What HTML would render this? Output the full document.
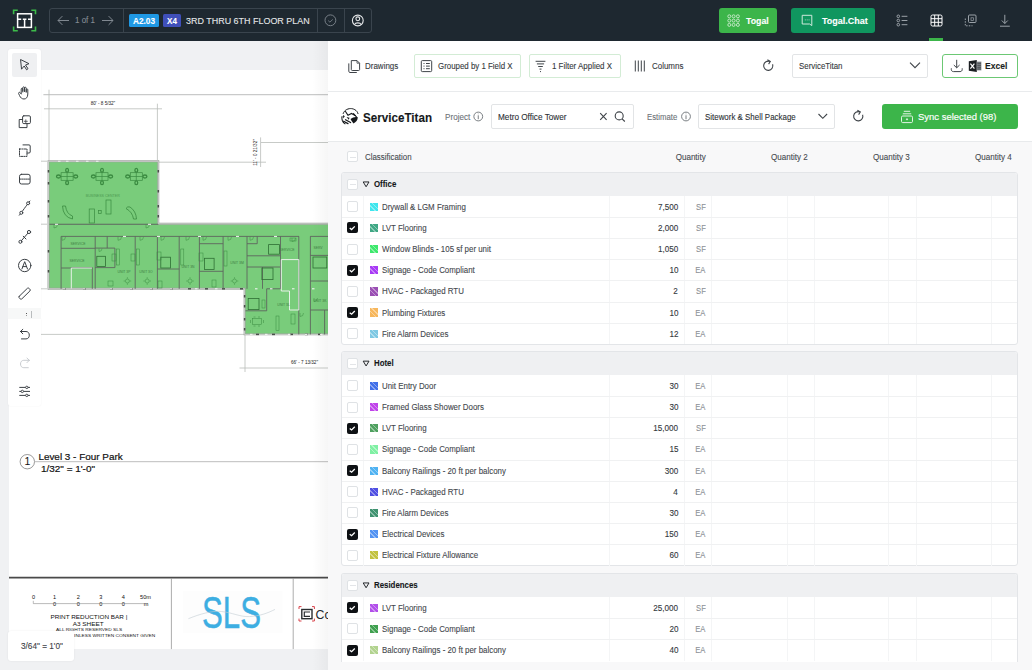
<!DOCTYPE html><html><head><meta charset="utf-8"><title>Togal</title><style>
*{margin:0;padding:0;box-sizing:border-box}
html,body{width:1032px;height:670px;overflow:hidden;background:#f0f1f3;font-family:"Liberation Sans", sans-serif;}
.abs{position:absolute}
.t{position:absolute;white-space:nowrap;line-height:1;-webkit-text-stroke:0.1px currentColor}
svg{position:absolute;overflow:visible}
.cb{position:absolute;width:10.8px;height:11px;border:1px solid #dfe2e5;border-radius:2px;background:#fff}
.cbk{position:absolute;width:10.8px;height:11px;border-radius:2px;background:#0e1114}
.sw{position:absolute;width:8.3px;height:8.2px}
</style></head><body>
<div class="abs" style="left:0;top:0;width:1032px;height:40.6px;background:#1e2830"></div>
<svg style="left:0;top:0" width="60" height="41" viewBox="0 0 60 41">
<g fill="none" stroke="#3dbb4a" stroke-width="1.6">
<path d="M13.6 14.3 V10.3 H17.8"/><path d="M31.3 10.3 H35.5 V14.3"/><path d="M13.6 26.6 V30.7 H17.8"/><path d="M31.3 30.7 H35.5 V26.6"/>
</g>
<g fill="none" stroke="#ffffff" stroke-width="1.5">
<rect x="17.6" y="13.8" width="13.8" height="13.6"/>
<path d="M17.6 19.3 H21.2 M22.8 19.3 H26.4 M28 19.3 H31.4 M24.6 19.3 V27.4"/>
</g></svg>
<div class="abs" style="left:49px;top:8.4px;width:323px;height:24.2px;border:1px solid #3a444d;border-radius:3px"></div>
<div class="abs" style="left:122.6px;top:8.4px;width:1px;height:24.2px;background:#3a444d"></div>
<div class="abs" style="left:316.8px;top:8.4px;width:1px;height:24.2px;background:#3a444d"></div>
<div class="abs" style="left:344.3px;top:8.4px;width:1px;height:24.2px;background:#3a444d"></div>
<svg style="left:0;top:0" width="372" height="41">
<g fill="none" stroke="#808890" stroke-width="1">
<path d="M58 20.5 H69 M62.4 16.1 L58 20.5 L62.4 24.9"/>
<path d="M102 20.5 H113 M108.6 16.1 L113 20.5 L108.6 24.9"/>
<circle cx="330.4" cy="20.3" r="5.4" stroke-width="0.9"/>
<path d="M328.2 20.6 L329.9 22.1 L332.8 19.4" stroke-width="0.8"/>
</g>
<g fill="none" stroke="#e6e8ea" stroke-width="1.1">
<circle cx="357.8" cy="20.5" r="5.4"/>
<circle cx="357.8" cy="18.8" r="1.9"/>
<path d="M354.4 24.6 C355.4 22.3 360.2 22.3 361.2 24.6"/>
</g></svg>
<div class="t" style="left:75.20px;top:16px;width:21.27px;font-size:8.5px;color:#858d94;transform:scaleX(0.9357);transform-origin:0 0;">1 of 1</div>
<div class="abs" style="left:129px;top:13.9px;width:29.5px;height:13px;background:#1f98e4;border-radius:1.5px"></div>
<div class="t" style="left:132.75px;top:17px;width:22.68px;font-size:8.5px;font-weight:bold;color:#fff;transform:scaleX(0.9699);transform-origin:0 0;">A2.03</div>
<div class="abs" style="left:163px;top:13.9px;width:18px;height:13px;background:#3f4fb9;border-radius:1.5px"></div>
<div class="t" style="left:166.90px;top:17px;width:10.40px;font-size:8.5px;font-weight:bold;color:#fff;transform:scaleX(0.9522);transform-origin:0 0;">X4</div>
<div class="t" style="left:185.90px;top:16px;width:131.27px;font-size:9.5px;color:#e4e7e9;transform:scaleX(0.9423);transform-origin:0 0;">3RD THRU 6TH FLOOR PLAN</div>
<div class="abs" style="left:719.2px;top:7.9px;width:58.3px;height:24.9px;background:#3cb54a;border-radius:3px"></div>
<div class="t" style="left:746.20px;top:17px;width:23.98px;font-size:9.25px;font-weight:bold;color:#fff;transform:scaleX(0.9467);transform-origin:0 0;">Togal</div>
<div class="abs" style="left:791px;top:7.9px;width:84px;height:24.9px;background:#10965f;border-radius:3px"></div>
<div class="t" style="left:821.60px;top:17px;width:47.10px;font-size:9.25px;font-weight:bold;color:#fff;transform:scaleX(0.9702);transform-origin:0 0;">Togal.Chat</div>
<svg style="left:0;top:0" width="1032" height="41">
<g fill="none" stroke="#d9f0db" stroke-width="0.8"><circle cx="729.30" cy="16.30" r="1.5"/><circle cx="733.60" cy="16.30" r="1.5"/><circle cx="737.90" cy="16.30" r="1.5"/><circle cx="729.30" cy="20.60" r="1.5"/><circle cx="733.60" cy="20.60" r="1.5"/><circle cx="737.90" cy="20.60" r="1.5"/><circle cx="729.30" cy="24.90" r="1.5"/><circle cx="733.60" cy="24.90" r="1.5"/><circle cx="737.90" cy="24.90" r="1.5"/></g>
<g fill="none" stroke="#cfe9dc" stroke-width="1">
<path d="M802.2 15.3 H811.8 V25.6 L809.6 24 H802.2 Z"/>
<path d="M804.9 19.9 h0.7 M806.8 19.9 h0.7 M808.7 19.9 h0.7"/>
</g>
<g fill="none" stroke="#9ba2a8" stroke-width="1">
<circle cx="898.3" cy="16.3" r="1.3"/><circle cx="898.3" cy="20.5" r="1.3"/><circle cx="898.3" cy="24.7" r="1.3"/>
<path d="M901.6 16.3 H907.4 M901.6 20.5 H907.4 M901.6 24.7 H907.4"/>
</g>
<g fill="none" stroke="#ffffff" stroke-width="1">
<rect x="931" y="15" width="11" height="11" rx="1.5"/>
<path d="M934.7 15 V26 M938.3 15 V26 M931 18.7 H942 M931 22.3 H942"/>
</g>
<g fill="none" stroke="#9ba2a8" stroke-width="1">
<rect x="968.5" y="15" width="7.5" height="7.5" rx="1"/>
<rect x="971" y="17.8" width="2.6" height="2.6" stroke-width="0.7"/>
<path d="M965.3 18.5 V25.8 H972.5" stroke-dasharray="1.5 1.2"/>
<path d="M1004.8 14.8 V23.5 M1001.8 20.5 L1004.8 23.5 L1007.8 20.5 M1000 26.2 H1009.8"/>
</g>
</svg>
<div class="abs" style="left:929.4px;top:38.2px;width:14px;height:2.4px;background:#3cb54a"></div>
<div class="abs" style="left:0;top:40.6px;width:328px;height:630px;background:#f0f1f3"></div>
<div class="abs" style="left:9px;top:70px;width:319px;height:579.3px;background:#ffffff"></div>
<svg style="left:0;top:0" width="328" height="670" viewBox="0 0 328 670">
<defs><clipPath id="pc"><rect x="9" y="70" width="319" height="579.3"/></clipPath></defs>
<g clip-path="url(#pc)">
<g stroke="#b9bcb9" stroke-width="0.8" fill="none">
<path d="M43.4 94.7 H330" stroke-width="1.3" stroke="#c9caca"/><path d="M49 89.7 V160 M44 108.8 H162 M157.4 103.7 V160 M158 162.2 H266 M260.6 137.4 V167 M261 142.5 H330"/>
<path d="M40 161.2 H47 M40 224.2 H47 M40 288.8 H47"/>
<path d="M40 334.4 H244.5 M245 334 V372 M239.5 368 H330"/>
</g>
<text x="103" y="104.8" font-family="Liberation Sans" font-size="4.6" text-anchor="middle" fill="#222">80' - 8 5/32"</text>
<text transform="translate(256.6 152.5) rotate(-90)" font-family="Liberation Sans" font-size="4.6" text-anchor="middle" fill="#222">11' - 0 21/32"</text>
<text x="304.5" y="364.2" font-family="Liberation Sans" font-size="4.6" text-anchor="middle" fill="#222">66' - 7 13/32"</text>
<path d="M48.5 161.3 H158.3 V223.8 H330 V334.4 H244.6 V288.8 H48.5 Z" fill="#79cc7b" stroke="#9a9f9a" stroke-width="1.9"/>
<path d="M48.5 161.3 H158.3 V223.8 H330 V334.4 H244.6 V288.8 H48.5 Z" fill="none" stroke="#e9ece9" stroke-width="0.6"/>
<g stroke="#4a4f4a" stroke-width="1.5">
<path d="M63 288.8 h3"/>
<path d="M83 288.8 h3"/>
<path d="M110 288.8 h3"/>
<path d="M130 288.8 h3"/>
<path d="M150 288.8 h3"/>
<path d="M170 288.8 h3"/>
<path d="M188 288.8 h3"/>
<path d="M205 288.8 h3"/>
<path d="M222 288.8 h3"/>
<path d="M240 288.8 h3"/>
<path d="M256 334.4 h3"/>
<path d="M272 334.4 h3"/>
<path d="M290 334.4 h3"/>
<path d="M305 334.4 h3"/>
<path d="M318 334.4 h3"/>
<path d="M48.5 170 v2.5"/>
<path d="M48.5 182 v2.5"/>
<path d="M48.5 200 v2.5"/>
<path d="M48.5 215 v2.5"/>
<path d="M48.5 250 v2.5"/>
<path d="M48.5 270 v2.5"/>
<path d="M158.3 170 v2.5"/>
<path d="M158.3 190 v2.5"/>
<path d="M158.3 205 v2.5"/>
<path d="M158.3 215 v2.5"/>
<path d="M244.6 295 v2.5"/>
<path d="M244.6 305 v2.5"/>
<path d="M244.6 318 v2.5"/>
<path d="M244.6 328 v2.5"/>
</g>
<g stroke="#5f655f" stroke-width="0.9" fill="none">
<path d="M49.5 224.3 H158.3" stroke-width="1.1"/>
<path d="M61.1 236.4 H299 M310.2 236.4 H330"/>
<path d="M61.1 236.4 V288.8 M95.2 236.4 V288.8 M135.2 236.4 V288.8 M179.2 236.4 V288.8 M223.1 236.4 V288.8"/>
<path d="M61.1 248.3 H95.2 M61.1 268 H71.3 M95.2 248.1 H114.9 M95.2 267.6 H114.9 M107.2 236.4 V248.1 M114.9 248.1 V267.6"/>
<path d="M71.3 267.6 H92.3 V288.8"/>
<path d="M157.4 236.4 V288.8 M157.4 269 H179.2 M199.4 236.4 V288.8 M199.4 243.7 H223.1 M199.4 271.3 H223.1"/>
<path d="M247 236.4 V288.8 M247 243.7 H257.2 M257.2 236.4 V243.7 M247 255.8 H280.5 M247 267 H280.5 M262.5 267 V288.8 M280.5 236.4 V288.8 M266.7 288.8 H280.5"/>
<path d="M298.8 236.4 V334.4 M310.4 236.4 V334.4 M310.4 255.4 H330 M310.4 281 H330 M310.4 310 H330 M324.6 310 V334.4"/>
<path d="M245.5 310.8 H266.7 V288.8"/>
</g>
<path d="M281.3 259.6 H298.8 V310 H289.5 V291 H281.3 Z" fill="none" stroke="#f4f6f4" stroke-width="0.9"/>
<path d="M71.3 288.5 V268 H92" fill="none" stroke="#f4f6f4" stroke-width="0.9"/>
<g stroke="#3a8a40" stroke-width="0.7" fill="none">
<rect x="61.099999999999994" y="172.7" width="12" height="7.6"/><path d="M67.1 172.7 V180.3 M61.099999999999994 176.5 H73.1"/>
<ellipse cx="67.1" cy="170.3" rx="1.4" ry="1.9" stroke-width="1.3"/><ellipse cx="67.1" cy="182.7" rx="1.4" ry="1.9" stroke-width="1.3"/>
<ellipse cx="58.49999999999999" cy="176.5" rx="2" ry="1.5" stroke-width="1.3"/><ellipse cx="75.69999999999999" cy="176.5" rx="2" ry="1.5" stroke-width="1.3"/>
<rect x="96.0" y="172.7" width="12" height="7.6"/><path d="M102.0 172.7 V180.3 M96.0 176.5 H108.0"/>
<ellipse cx="102.0" cy="170.3" rx="1.4" ry="1.9" stroke-width="1.3"/><ellipse cx="102.0" cy="182.7" rx="1.4" ry="1.9" stroke-width="1.3"/>
<ellipse cx="93.4" cy="176.5" rx="2" ry="1.5" stroke-width="1.3"/><ellipse cx="110.6" cy="176.5" rx="2" ry="1.5" stroke-width="1.3"/>
<rect x="130.3" y="172.7" width="12" height="7.6"/><path d="M136.3 172.7 V180.3 M130.3 176.5 H142.3"/>
<ellipse cx="136.3" cy="170.3" rx="1.4" ry="1.9" stroke-width="1.3"/><ellipse cx="136.3" cy="182.7" rx="1.4" ry="1.9" stroke-width="1.3"/>
<ellipse cx="127.70000000000002" cy="176.5" rx="2" ry="1.5" stroke-width="1.3"/><ellipse cx="144.9" cy="176.5" rx="2" ry="1.5" stroke-width="1.3"/>
<path d="M62.5 206 h3 Q66.5 214 72.5 216 v3 Q63 217 62.5 206 Z" stroke-width="0.8"/>
<path d="M126 208.5 Q127.5 206 130 207 Q136 211 136.5 219 h-3 Q132.5 212 126 208.5 Z" stroke-width="0.8"/>
<rect x="89.2" y="209" width="5.4" height="14"/><rect x="98.4" y="210.5" width="2.8" height="3"/><rect x="106" y="200" width="5" height="14"/>
</g>
<text x="102.8" y="196.7" font-family="Liberation Sans" font-size="3.6" text-anchor="middle" fill="#4d9a52">BUSINESS CENTER</text>
<g font-family="Liberation Sans" font-size="3.4" fill="#3f7f44" text-anchor="middle">
<text x="78" y="245">SERVICE</text>
<text x="77" y="262">SERVICE</text>
<text x="124" y="273">UNIT 3P</text>
<text x="146" y="273">UNIT 3O</text>
<text x="188" y="268">UNIT 3N</text>
<text x="237" y="264">UNIT 3M</text>
<text x="287" y="250.5">SERVICE</text>
<text x="318" y="249">SERV</text>
<text x="283.5" y="305.5">UNIT 3L</text>
<text x="320" y="302">UNIT 3K</text>
</g>
<g stroke="#2f6f35" stroke-width="0.8" fill="none">
<rect x="96.8" y="256.3" width="8.7" height="10.2"/>
<rect x="160.8" y="257.2" width="9.7" height="10.8"/>
<rect x="204.5" y="258.3" width="9.6" height="11.1"/>
<rect x="268.6" y="244.6" width="10.8" height="9.6"/>
<rect x="248.2" y="298.5" width="10.8" height="11.1"/>
<rect x="313" y="257" width="13.8" height="11"/>
<rect x="261.9" y="268" width="11.1" height="11.6"/>
</g>
<g stroke="#3a8a40" stroke-width="0.5" fill="none">
<rect x="116.5" y="249" width="3" height="16"/>
<rect x="136.5" y="249" width="3" height="16"/>
<rect x="180.8" y="249" width="3" height="16"/>
<rect x="224" y="251" width="3" height="15"/>
<rect x="276" y="316" width="3" height="14.5"/>
<rect x="112" y="254" width="4" height="7"/>
<rect x="131" y="254" width="4" height="7"/>
<rect x="157" y="252" width="4" height="8"/>
<rect x="199" y="253" width="4" height="8"/>
<rect x="262" y="300" width="3" height="8"/>
<rect x="291" y="314" width="4" height="10"/>
<rect x="108" y="281" width="5" height="5"/>
<rect x="158" y="281" width="4" height="7"/>
<rect x="212" y="280" width="4" height="7"/>
<rect x="290" y="238" width="6" height="3"/>
<circle cx="127.4" cy="281" r="2"/><path d="M123.60000000000001 281 h1.4 M129.8 281 h1.4 M127.4 277.2 v1.4 M127.4 283.4 v1.4"/>
<circle cx="147.2" cy="281" r="2"/><path d="M143.39999999999998 281 h1.4 M149.6 281 h1.4 M147.2 277.2 v1.4 M147.2 283.4 v1.4"/>
<circle cx="190" cy="281" r="2"/><path d="M186.2 281 h1.4 M192.4 281 h1.4 M190 277.2 v1.4 M190 283.4 v1.4"/>
<circle cx="234.5" cy="281" r="2"/><path d="M230.7 281 h1.4 M236.9 281 h1.4 M234.5 277.2 v1.4 M234.5 283.4 v1.4"/>
<rect x="252.5" y="318.5" width="9" height="6"/><path d="M253.5 317 h2 M258 317 h2 M253.5 326 h2 M258 326 h2 M250.5 320 v3 M263.5 320 v3"/>
<path d="M62 236.8 v3.5 a3.5 3.5 0 0 0 3.5 -3.5"/>
<path d="M99 248.5 v3 a3 3 0 0 0 3 -3"/>
<path d="M118 236.8 v3.5 a3.5 3.5 0 0 0 3.5 -3.5"/>
<path d="M140 236.8 v3.5 a3.5 3.5 0 0 0 3.5 -3.5"/>
<path d="M161 236.8 v3.5 a3.5 3.5 0 0 0 3.5 -3.5"/>
<path d="M186 236.8 v3.5 a3.5 3.5 0 0 0 3.5 -3.5"/>
<path d="M203 236.8 v3.5 a3.5 3.5 0 0 0 3.5 -3.5"/>
<path d="M228 236.8 v3.5 a3.5 3.5 0 0 0 3.5 -3.5"/>
<path d="M250 236.8 v3.5 a3.5 3.5 0 0 0 3.5 -3.5"/>
<path d="M292 238 v3.5 a3.5 3.5 0 0 0 3.5 -3.5"/>
<path d="M54 224.5 v3.5 a3.5 3.5 0 0 0 3.5 -3.5"/>
<path d="M146 224.5 v3.5 a3.5 3.5 0 0 0 3.5 -3.5"/>
<path d="M300 313 v3.5 a3.5 3.5 0 0 0 3.5 -3.5"/>
<path d="M314 298 v3.5 a3.5 3.5 0 0 0 3.5 -3.5"/>
</g>
<g stroke="#f1f4f1" stroke-width="1.1">
<path d="M58 161.3 h2.5"/>
<path d="M66 161.3 h2.5"/>
<path d="M76 161.3 h2.5"/>
<path d="M86 161.3 h2.5"/>
<path d="M96 161.3 h2.5"/>
<path d="M63 288.8 h2.5"/>
<path d="M83 288.8 h2.5"/>
<path d="M110 288.8 h2.5"/>
<path d="M130 288.8 h2.5"/>
<path d="M150 288.8 h2.5"/>
<path d="M170 288.8 h2.5"/>
<path d="M195 288.8 h2.5"/>
<path d="M215 288.8 h2.5"/>
<path d="M255 288.8 h2.5"/>
<path d="M270 288.8 h2.5"/>
<path d="M292 288.8 h2.5"/>
<path d="M312 288.8 h2.5"/>
<path d="M250 334.4 h2.5"/>
<path d="M265 334.4 h2.5"/>
<path d="M288 334.4 h2.5"/>
<path d="M305 334.4 h2.5"/>
<path d="M320 334.4 h2.5"/>
</g>
<g stroke="#f6f8f6" stroke-width="1">
<path d="M55 224.3 h3"/>
<path d="M148 224.3 h3"/>
<path d="M123 236.4 h3"/>
<path d="M157 236.4 h3"/>
<path d="M198 236.4 h3"/>
<path d="M236 236.4 h3"/>
<path d="M274 236.4 h3"/>
</g>
<circle cx="27.3" cy="461.7" r="7.2" fill="#fff" stroke="#555" stroke-width="0.6"/>
<text x="27.3" y="465.4" font-family="Liberation Sans" font-size="10.5" text-anchor="middle" fill="#111">1</text>
<path d="M34.5 461.7 H330" stroke="#b5b5b5" stroke-width="0.9"/>
<text x="38.4" y="460.2" font-family="Liberation Sans" font-size="9.85" fill="#111" stroke="#111" stroke-width="0.2" textLength="84.3" lengthAdjust="spacingAndGlyphs">Level 3 - Four Park</text>
<text x="41" y="471.9" font-family="Liberation Sans" font-size="9.9" fill="#111" stroke="#111" stroke-width="0.2" textLength="54" lengthAdjust="spacingAndGlyphs">1/32" = 1'-0"</text>
<path d="M9 577.6 H330" stroke="#4a4a4a" stroke-width="1.8"/>
<path d="M171.4 578.5 V649.3 M293.2 578.5 V649.3" stroke="#8a8a8a" stroke-width="0.7"/>
<g font-family="Liberation Sans" fill="#111" text-anchor="middle">
<text x="33.6" y="599.4" font-size="5.6">0</text>
<text x="54.5" y="599.4" font-size="5.6">1</text>
<text x="78.3" y="599.4" font-size="5.6">2</text>
<text x="100.7" y="599.4" font-size="5.6">3</text>
<text x="123.4" y="599.4" font-size="5.6">4</text>
<text x="145.5" y="599.4" font-size="5.6">50m</text>
<text x="54.5" y="605.9" font-size="5.6">0</text>
<text x="78.3" y="605.9" font-size="5.6">0</text>
<text x="100.7" y="605.9" font-size="5.6">0</text>
<text x="123.4" y="605.9" font-size="5.6">0</text>
<text x="146" y="605.9" font-size="5.6">m</text>
<text x="88.9" y="618.6" font-size="6.2" textLength="76.8" lengthAdjust="spacingAndGlyphs">PRINT REDUCTION BAR |</text>
<text x="88.2" y="625.5" font-size="6.2" textLength="31" lengthAdjust="spacingAndGlyphs">A3 SHEET</text>
<text x="89.1" y="631" font-size="4.3" textLength="66" lengthAdjust="spacingAndGlyphs">ALL RIGHTS RESERVED SLS</text>
<text x="114.6" y="636.8" font-size="4.3" textLength="81" lengthAdjust="spacingAndGlyphs">INLESS WRITTEN CONSENT GIVEN</text>
</g>
<path d="M33.3 600.8 V603.6 H148" stroke="#777" stroke-width="0.5" fill="none"/>
<rect x="183.1" y="590.8" width="99.5" height="42.5" fill="#fdfdfd"/>
<text x="231.5" y="628.2" font-family="Liberation Sans" font-size="44.5" text-anchor="middle" fill="#3daee2" stroke="#3daee2" stroke-width="0.5" textLength="59" lengthAdjust="spacingAndGlyphs">SLS</text>
<path d="M188.4 618.7 C200 614 212 610.5 221.5 611.5 C232 612.5 240 617 249.4 616.6 C260 616 268 613 275 609.4" stroke="#c3cdd3" stroke-width="0.6" fill="none"/>
<g fill="none" stroke="#d9434b" stroke-width="1"><path d="M299 609 V606.6 H301.5 M312 606.6 H314.4 V609 M299 618.6 V621 H301.5 M312 621 H314.4 V618.6"/></g>
<rect x="301.8" y="609.5" width="10.2" height="9.2" fill="none" stroke="#2a2d30" stroke-width="1.4"/>
<path d="M310 612 H304.3 V616.3 H310" fill="none" stroke="#2a2d30" stroke-width="1.2"/>
<text x="315.6" y="618.8" font-family="Liberation Sans" font-size="13.5" fill="#25282b" textLength="15" lengthAdjust="spacingAndGlyphs">Cc</text>
</g></svg>
<div class="abs" style="left:8px;top:48.7px;width:33.2px;height:259.5px;background:#fff;border-radius:3px 3px 0 0;box-shadow:0 0 2px rgba(0,0,0,0.06)"></div>
<div class="abs" style="left:8px;top:318.8px;width:33.2px;height:87.6px;background:#fff;border-radius:0 0 3px 3px;box-shadow:0 0 2px rgba(0,0,0,0.06)"></div>
<div class="abs" style="left:12.2px;top:52.7px;width:24.4px;height:23.9px;background:#eff0f2;border-radius:2px"></div>
<div class="abs" style="left:8px;top:308.2px;width:33.2px;height:10.6px;background:#f7f8f8"></div>
<div class="abs" style="left:31px;top:310.5px;width:0.8px;height:7px;background:#b9bcbe"></div>
<div class="abs" style="left:25.5px;top:312.5px;width:1.5px;height:1.2px;background:#555"></div><div class="abs" style="left:26px;top:315px;width:1.2px;height:1.2px;background:#999"></div>
<svg style="left:0;top:0" width="45" height="410">
<g fill="none" stroke="#3b4045" stroke-width="1" stroke-linejoin="round" stroke-linecap="round">
<path d="M20.9 59.7 L29 63.7 L25.5 65 L28 68.7 L26.6 69.8 L24.2 66 L21.8 68.9 Z"/>
<path d="M21.2 93.5 V89 C21.2 88 22.8 88 22.8 89 V92 M22.8 91 V87.6 C22.8 86.6 24.5 86.6 24.5 87.6 V91.5 M24.5 91 V88 C24.5 87 26.2 87 26.2 88 V92 M26.2 92 V89.7 C26.2 88.7 27.8 88.7 27.8 89.7 V94 C27.8 97.5 26 99 24 99 C22 99 20.5 97.8 19.5 95.5 L18.6 93.5 C18.3 92.5 19.5 91.8 20.2 92.7 L21.2 94"/>
<rect x="22.6" y="115.8" width="7.8" height="7.8" rx="1.2"/><path d="M22.6 119.5 H19.2 V127.6 H27 V123.6"/><path d="M24.3 121.3 H27.3 M25.8 119.8 V122.8" stroke-width="0.8"/>
<path d="M23 144.9 H29 C29.8 144.9 30.2 145.3 30.2 146 V152 C30.2 152.6 29.8 153 29 153 H27"/><path d="M19.5 149 H27 V156.4 H19.5 Z" stroke-dasharray="1.3 1.1"/>
<rect x="19.5" y="174.3" width="10.6" height="9.7" rx="2"/><path d="M20 179.1 H29.6" stroke-dasharray="1 0.9"/>
<circle cx="21.3" cy="212.8" r="1.5"/><circle cx="28.1" cy="203.3" r="1.5"/><path d="M19.3 215.2 L20.3 214 M22.3 211.3 L27.1 204.7 M29.1 201.9 L30.3 200.6" stroke-dasharray="1.2 0.8"/>
<circle cx="20.4" cy="241.8" r="1.5"/><circle cx="29" cy="232" r="1.6"/><path d="M21.5 240.6 L27.8 233.3 M23.2 236.2 L26 239"/>
<circle cx="24.7" cy="265.5" r="6.2"/><path d="M21.9 269 L24.7 261.7 L27.5 269 M22.9 266.6 H26.5"/>
<path d="M19.3 296.2 L27.3 288.4 C27.8 287.9 28.6 287.9 29.1 288.4 L29.9 289.2 C30.4 289.7 30.4 290.5 29.9 291 L21.9 298.8 C21.4 299.3 20.6 299.3 20.1 298.8 L19.3 298 C18.8 297.5 18.8 296.7 19.3 296.2 Z"/>
<path d="M20.5 331.5 L22.8 329.3 M20.5 331.5 L22.8 333.8 M20.5 331.5 H26 C28 331.5 29.3 333 29.3 335.2 C29.3 337.4 28 338.9 26 338.9 H21.5"/>
</g>
<g fill="none" stroke="#c9ccd0" stroke-width="1" stroke-linecap="round" stroke-linejoin="round">
<path d="M29.3 360.3 L27 358.1 M29.3 360.3 L27 362.6 M29.3 360.3 H23.8 C21.8 360.3 20.5 361.8 20.5 364 C20.5 366.2 21.8 367.7 23.8 367.7 H28.3"/>
</g>
<g fill="none" stroke="#3b4045" stroke-width="1">
<path d="M19.3 387.4 H30 M19.3 391.4 H30 M19.3 395.4 H30"/>
</g>
<g fill="#fff" stroke="#3b4045" stroke-width="0.9">
<circle cx="26.8" cy="387.4" r="1.2"/><circle cx="22.3" cy="391.4" r="1.2"/><circle cx="26.8" cy="395.4" r="1.2"/>
</g></svg>
<div class="abs" style="left:312px;top:40.6px;width:16px;height:630px;background:linear-gradient(to right,rgba(0,0,0,0),rgba(0,0,0,0.035))"></div>
<div class="abs" style="left:8.2px;top:631.4px;width:66px;height:30px;background:#fff;border-radius:3px;box-shadow:0 0 2px rgba(0,0,0,0.08)"></div>
<div class="t" style="left:20.50px;top:642px;width:45.89px;font-size:9px;color:#3b4045;transform:scaleX(0.9130);transform-origin:0 0;">3/64&quot; = 1'0&quot;</div>
<div class="abs" style="left:328px;top:40.6px;width:704px;height:630px;background:#fff"></div>
<div class="abs" style="left:328px;top:90.8px;width:704px;height:1px;background:#e9ebed"></div>
<svg style="left:0;top:0" width="1032" height="92">
<g fill="none" stroke="#3f4449" stroke-width="1">
<path d="M351.3 60.6 H357 L359.6 63.2 V69.6 C359.6 70.1 359.2 70.5 358.7 70.5 H352.2 C351.7 70.5 351.3 70.1 351.3 69.6 Z"/>
<path d="M357 60.6 V63.2 H359.6" stroke-width="0.8"/>
<path d="M348.8 63.4 V71.3 C348.8 72 349.3 72.5 350 72.5 H356.8"/>
</g>
<g fill="none" stroke="#3f4449" stroke-width="1">
<rect x="421.3" y="60.6" width="10.4" height="11" rx="1"/>
<path d="M423.5 63.5 h1 M423.5 66.1 h1 M423.5 68.7 h1 M426 63.5 h3.8 M426 66.1 h3.8 M426 68.7 h3.8"/>
</g>
<g fill="none" stroke="#3f4449" stroke-width="1">
<path d="M535.6 61.3 H545.4 M536.9 63.9 H544.1 M538.2 66.5 H542.8 M539.5 69.1 H541.5 M540 71.6 h1"/>
</g>
<g fill="none" stroke="#3f4449" stroke-width="1">
<path d="M635.3 60.5 V71.5 M638.3 60.5 V71.5 M641.3 60.5 V71.5 M644.3 60.5 V71.5"/>
</g>
<g fill="none" stroke="#3f4449" stroke-width="1.1">
<path d="M772.6 64.3 A4.6 4.6 0 1 1 769.9 61.5"/>
<path d="M767.4 59.8 L770.3 61.5 L768.6 64.1"/>
</g>
<g fill="none" stroke="#3f4449" stroke-width="1.1">
<path d="M910 62.6 L915 67.6 L920 62.6"/>
</g>
<g fill="none" stroke="#3f4449" stroke-width="1">
<path d="M956.7 59.8 V67.8 M953.8 65 L956.7 67.8 L959.6 65 M951.3 68.3 V69.5 C951.3 70.8 952.2 71.6 953.5 71.6 H960 C961.3 71.6 962.2 70.8 962.2 69.5 V68.3"/>
</g>
<g>
<path d="M968.8 61.3 L976.8 59.9 V72.1 L968.8 70.7 Z" fill="#1b1f22"/>
<rect x="976.8" y="61.6" width="4.6" height="8.8" fill="#8d9297"/>
<path d="M977.3 63.2 H981 M977.3 65.2 H981 M977.3 67.2 H981 M977.3 69 H981" stroke="#1b1f22" stroke-width="0.7"/>
<path d="M970.4 63.6 L974.4 68.6 M974.4 63.6 L970.4 68.6" stroke="#fff" stroke-width="1.2"/>
</g>
</svg>
<div class="t" style="left:365.20px;top:62px;width:35.43px;font-size:8.5px;color:#34393d;transform:scaleX(0.9399);transform-origin:0 0;">Drawings</div>
<div class="abs" style="left:414.4px;top:54.1px;width:106.9px;height:24.3px;border:1px solid #d3ecd5;border-radius:2px"></div>
<div class="t" style="left:438.20px;top:62px;width:80.32px;font-size:8.5px;color:#34393d;transform:scaleX(0.9287);transform-origin:0 0;">Grouped by 1 Field X</div>
<div class="abs" style="left:528.5px;top:54.1px;width:92.4px;height:24.3px;border:1px solid #d3ecd5;border-radius:2px"></div>
<div class="t" style="left:552.00px;top:62px;width:64.26px;font-size:8.5px;color:#34393d;transform:scaleX(0.9337);transform-origin:0 0;">1 Filter Applied X</div>
<div class="t" style="left:651.70px;top:62px;width:33.54px;font-size:8.5px;color:#34393d;transform:scaleX(0.9362);transform-origin:0 0;">Columns</div>
<div class="abs" style="left:791.8px;top:54px;width:136.3px;height:24.3px;border:1px solid #e2e4e6;border-radius:2px"></div>
<div class="t" style="left:798.60px;top:62px;width:46.93px;font-size:8.5px;color:#34393d;transform:scaleX(0.9270);transform-origin:0 0;">ServiceTitan</div>
<div class="abs" style="left:942px;top:54px;width:76.3px;height:24.3px;border:1.2px solid #6cc874;border-radius:3px"></div>
<div class="t" style="left:985.00px;top:62px;width:22.87px;font-size:8.75px;font-weight:bold;color:#1b1f22;transform:scaleX(0.9796);transform-origin:0 0;">Excel</div>
<svg style="left:0;top:0" width="1032" height="140">
<g fill="none" stroke="#15181b" stroke-linecap="round">
<path d="M343.2 113.5 C344.5 110 348 108.3 351.5 108.6 C354.5 108.9 357.2 110.8 358 113.6" stroke-width="1" stroke-dasharray="2 0.8"/>
<path d="M342 116.5 C341.6 119.5 342.6 122.4 345 123.8" stroke-width="1.1" stroke-dasharray="1.6 0.8"/>
<path d="M345.5 111.5 L348 115.3 L351.5 113.5 L355.5 115.8" stroke-width="1.1"/>
<path d="M343.6 121.2 L348 123.6 M345.5 119.7 L350.6 122.6" stroke-width="1.2"/>
<path d="M353.5 113.6 L356.6 117" stroke-width="1.1"/>
</g>
<path d="M350.5 119 C352.5 117.5 355.5 116.5 357.8 117.3 C357.8 120 356 122.3 353.5 123.4 C352.3 122 351.2 120.5 350.5 119 Z" fill="#15181b"/>
<path d="M346.5 117 L349.5 117.8 L348.8 119.8 Z" fill="#15181b"/>
<path d="M343 115 L344.8 116.2 L343.2 118.5 Z" fill="#15181b"/>
</svg>
<div class="t" style="left:362.50px;top:112px;width:74.12px;font-size:12.5px;font-weight:bold;color:#15181b;transform:scaleX(0.9310);transform-origin:0 0;">ServiceTitan</div>
<div class="t" style="left:444.90px;top:113px;width:26.46px;font-size:8.5px;color:#6d7277;transform:scaleX(0.9563);transform-origin:0 0;">Project</div>
<div class="t" style="left:497.60px;top:113px;width:71.02px;font-size:8.5px;color:#2b3034;transform:scaleX(0.9645);transform-origin:0 0;">Metro Office Tower</div>
<div class="abs" style="left:491px;top:104.3px;width:142.6px;height:24.5px;border:1px solid #e2e4e6;border-radius:2px"></div>
<div class="t" style="left:647.00px;top:113px;width:33.07px;font-size:8.5px;color:#6d7277;transform:scaleX(0.9133);transform-origin:0 0;">Estimate</div>
<div class="abs" style="left:698.1px;top:104.3px;width:137.2px;height:24.4px;border:1px solid #e2e4e6;border-radius:2px"></div>
<div class="t" style="left:705.10px;top:113px;width:97.33px;font-size:8.5px;color:#2b3034;transform:scaleX(0.9319);transform-origin:0 0;">Sitework &amp; Shell Package</div>
<div class="abs" style="left:882px;top:104.2px;width:136.4px;height:24.6px;background:#3cb54a;border-radius:3px"></div>
<div class="t" style="left:917.90px;top:112px;width:80.75px;font-size:9.75px;color:#fff;transform:scaleX(0.9709);transform-origin:0 0;-webkit-text-stroke:0.15px #fff">Sync selected (98)</div>
<svg style="left:0;top:0" width="1032" height="140">
<g fill="none" stroke="#6b7075" stroke-width="0.9">
<circle cx="478.25" cy="116.5" r="4.4"/>
<path d="M478.25 115.3 V119.2 M478.25 113.7 v0.5"/>
<circle cx="686" cy="116.5" r="4.4"/>
<path d="M686 115.3 V119.2 M686 113.7 v0.5"/>
</g>
<g fill="none" stroke="#3f4449" stroke-width="1.1">
<path d="M600.2 113.2 L606.6 119.8 M606.6 113.2 L600.2 119.8"/>
<circle cx="619.2" cy="115.9" r="4"/>
<path d="M622.1 118.8 L624.8 121.5"/>
<path d="M818.5 114 L822.8 118.3 L827.1 114"/>
<path d="M862.6 114.8 A4.6 4.6 0 1 1 859.9 112"/>
<path d="M857.4 110.3 L860.3 112 L858.6 114.6"/>
</g>
<g fill="none" stroke="#e3f4e5" stroke-width="1">
<path d="M903.8 111.3 H910.2 M902.8 113.8 H911.2"/>
<rect x="901.5" y="116" width="11" height="6.6" rx="1.2"/>
<circle cx="907" cy="119.3" r="0.6" fill="#e3f4e5"/>
</g></svg>
<div class="abs" style="left:328px;top:141px;width:704px;height:529px;background:#f8f8f9"></div>
<div class="abs" style="left:328px;top:140.6px;width:704px;height:1px;background:#e8eaec"></div>
<div class="cb" style="left:347px;top:151.4px"></div>
<div class="abs" style="left:349.5px;top:156.5px;width:6px;height:1px;background:#e3e5e8"></div>
<div class="t" style="left:364.65px;top:153px;width:50.08px;font-size:8.5px;color:#464b50;transform:scaleX(0.9306);transform-origin:0 0;">Classification</div>
<div class="t" style="left:674.24px;top:153px;width:31.66px;font-size:8.5px;color:#464b50;transform:scaleX(0.9470);transform-origin:100% 0;">Quantity</div>
<div class="t" style="left:768.86px;top:153px;width:38.74px;font-size:8.5px;color:#464b50;transform:scaleX(0.9470);transform-origin:100% 0;">Quantity 2</div>
<div class="t" style="left:871.26px;top:153px;width:38.74px;font-size:8.5px;color:#464b50;transform:scaleX(0.9470);transform-origin:100% 0;">Quantity 3</div>
<div class="t" style="left:973.16px;top:153px;width:38.74px;font-size:8.5px;color:#464b50;transform:scaleX(0.9470);transform-origin:100% 0;">Quantity 4</div>
<div class="abs" style="left:341.2px;top:171.80px;width:676.8px;height:173.02px;background:#fff;border:1px solid #e3e5e8;border-radius:3px"></div>
<div class="abs" style="left:342.2px;top:172.80px;width:674.8px;height:23.40px;background:#eff0f2;border-radius:2px 2px 0 0"></div>
<div class="cb" style="left:347.1px;top:179.05px"></div>
<div class="abs" style="left:349.6px;top:184.35px;width:6px;height:1px;background:#e3e5e8"></div>
<svg style="left:0;top:0" width="1" height="1"><path d="M363.2 181.95 H369 L366.1 186.75 Z" fill="none" stroke="#1b1f22" stroke-width="0.95" stroke-linejoin="round"/></svg>
<div class="t" style="left:374.00px;top:180px;width:24.09px;font-size:8.5px;font-weight:bold;color:#15181b;transform:scaleX(0.9250);transform-origin:0 0;">Office</div>
<div class="abs" style="left:363.4px;top:196.20000000000002px;width:1px;height:148.12px;background:#f4f5f6"></div>
<div class="abs" style="left:609.4px;top:196.20000000000002px;width:1px;height:148.12px;background:#f4f5f6"></div>
<div class="abs" style="left:684.3px;top:196.20000000000002px;width:1px;height:148.12px;background:#f4f5f6"></div>
<div class="abs" style="left:711.4px;top:196.20000000000002px;width:1px;height:148.12px;background:#f4f5f6"></div>
<div class="abs" style="left:786.5px;top:196.20000000000002px;width:1px;height:148.12px;background:#f4f5f6"></div>
<div class="abs" style="left:813.5px;top:196.20000000000002px;width:1px;height:148.12px;background:#f4f5f6"></div>
<div class="abs" style="left:888px;top:196.20000000000002px;width:1px;height:148.12px;background:#f4f5f6"></div>
<div class="abs" style="left:916.2px;top:196.20000000000002px;width:1px;height:148.12px;background:#f4f5f6"></div>
<div class="abs" style="left:991.3px;top:196.20000000000002px;width:1px;height:148.12px;background:#f4f5f6"></div>
<div class="cb" style="left:346.9px;top:201.28px"></div>
<div class="sw" style="left:369.9px;top:202.68px;background:linear-gradient(45deg,#3fe6ee 0 31%,#8bf0f4 31% 39%,#3fe6ee 39% 57%,#8bf0f4 57% 65%,#3fe6ee 65%)"></div>
<div class="t" style="left:382.40px;top:203px;width:90.21px;font-size:8.5px;color:#43474c;transform:scaleX(0.9300);transform-origin:0 0;">Drywall &amp; LGM Framing</div>
<div class="t" style="left:656.93px;top:203px;width:21.27px;font-size:8.5px;color:#33383c;transform:scaleX(0.9550);transform-origin:100% 0;">7,500</div>
<div class="t" style="left:694.94px;top:203px;width:10.86px;font-size:8.5px;color:#8b9095;transform:scaleX(0.9000);transform-origin:100% 0;">SF</div>
<div class="abs" style="left:342.2px;top:216.86px;width:674.8px;height:1px;background:#f0f1f2"></div>
<div class="cbk" style="left:346.9px;top:222.44px"></div>
<svg style="left:0;top:0" width="1" height="1"><path d="M349.7 228.04 L351.6 229.54 L354.8 226.34" fill="none" stroke="#fff" stroke-width="1.3"/></svg>
<div class="sw" style="left:369.9px;top:223.84px;background:linear-gradient(45deg,#3fa784 0 31%,#8bcab5 31% 39%,#3fa784 39% 57%,#8bcab5 57% 65%,#3fa784 65%)"></div>
<div class="t" style="left:382.40px;top:224px;width:47.88px;font-size:8.5px;color:#43474c;transform:scaleX(0.9300);transform-origin:0 0;">LVT Flooring</div>
<div class="t" style="left:656.93px;top:224px;width:21.27px;font-size:8.5px;color:#33383c;transform:scaleX(0.9550);transform-origin:100% 0;">2,000</div>
<div class="t" style="left:694.94px;top:224px;width:10.86px;font-size:8.5px;color:#8b9095;transform:scaleX(0.9000);transform-origin:100% 0;">SF</div>
<div class="abs" style="left:342.2px;top:238.02px;width:674.8px;height:1px;background:#f0f1f2"></div>
<div class="cb" style="left:346.9px;top:243.60px"></div>
<div class="sw" style="left:369.9px;top:245.00px;background:linear-gradient(45deg,#3de86c 0 31%,#8af1a6 31% 39%,#3de86c 39% 57%,#8af1a6 57% 65%,#3de86c 65%)"></div>
<div class="t" style="left:382.40px;top:245px;width:117.17px;font-size:8.5px;color:#43474c;transform:scaleX(0.9300);transform-origin:0 0;">Window Blinds - 105 sf per unit</div>
<div class="t" style="left:656.93px;top:245px;width:21.27px;font-size:8.5px;color:#33383c;transform:scaleX(0.9550);transform-origin:100% 0;">1,050</div>
<div class="t" style="left:694.94px;top:245px;width:10.86px;font-size:8.5px;color:#8b9095;transform:scaleX(0.9000);transform-origin:100% 0;">SF</div>
<div class="abs" style="left:342.2px;top:259.18px;width:674.8px;height:1px;background:#f0f1f2"></div>
<div class="cbk" style="left:346.9px;top:264.76px"></div>
<svg style="left:0;top:0" width="1" height="1"><path d="M349.7 270.36 L351.6 271.86 L354.8 268.66" fill="none" stroke="#fff" stroke-width="1.3"/></svg>
<div class="sw" style="left:369.9px;top:266.16px;background:linear-gradient(45deg,#a83af5 0 31%,#ca88f9 31% 39%,#a83af5 39% 57%,#ca88f9 57% 65%,#a83af5 65%)"></div>
<div class="t" style="left:382.40px;top:266px;width:99.70px;font-size:8.5px;color:#43474c;transform:scaleX(0.9300);transform-origin:0 0;">Signage - Code Compliant</div>
<div class="t" style="left:668.75px;top:266px;width:9.45px;font-size:8.5px;color:#33383c;transform:scaleX(0.9550);transform-origin:100% 0;">10</div>
<div class="t" style="left:694.46px;top:266px;width:11.34px;font-size:8.5px;color:#8b9095;transform:scaleX(0.9000);transform-origin:100% 0;">EA</div>
<div class="abs" style="left:342.2px;top:280.34px;width:674.8px;height:1px;background:#f0f1f2"></div>
<div class="cb" style="left:346.9px;top:285.92px"></div>
<div class="sw" style="left:369.9px;top:287.32px;background:linear-gradient(45deg,#9a4fb3 0 31%,#c295d1 31% 39%,#9a4fb3 39% 57%,#c295d1 57% 65%,#9a4fb3 65%)"></div>
<div class="t" style="left:382.40px;top:287px;width:88.02px;font-size:8.5px;color:#43474c;transform:scaleX(0.9300);transform-origin:0 0;">HVAC - Packaged RTU</div>
<div class="t" style="left:673.47px;top:287px;width:4.73px;font-size:8.5px;color:#33383c;transform:scaleX(0.9550);transform-origin:100% 0;">2</div>
<div class="t" style="left:694.94px;top:287px;width:10.86px;font-size:8.5px;color:#8b9095;transform:scaleX(0.9000);transform-origin:100% 0;">SF</div>
<div class="abs" style="left:342.2px;top:301.50px;width:674.8px;height:1px;background:#f0f1f2"></div>
<div class="cbk" style="left:346.9px;top:307.08px"></div>
<svg style="left:0;top:0" width="1" height="1"><path d="M349.7 312.68 L351.6 314.18 L354.8 310.98" fill="none" stroke="#fff" stroke-width="1.3"/></svg>
<div class="sw" style="left:369.9px;top:308.48px;background:linear-gradient(45deg,#f7b75c 0 31%,#fad39d 31% 39%,#f7b75c 39% 57%,#fad39d 57% 65%,#f7b75c 65%)"></div>
<div class="t" style="left:382.40px;top:309px;width:68.03px;font-size:8.5px;color:#43474c;transform:scaleX(0.9300);transform-origin:0 0;">Plumbing Fixtures</div>
<div class="t" style="left:668.75px;top:309px;width:9.45px;font-size:8.5px;color:#33383c;transform:scaleX(0.9550);transform-origin:100% 0;">10</div>
<div class="t" style="left:694.46px;top:309px;width:11.34px;font-size:8.5px;color:#8b9095;transform:scaleX(0.9000);transform-origin:100% 0;">EA</div>
<div class="abs" style="left:342.2px;top:322.66px;width:674.8px;height:1px;background:#f0f1f2"></div>
<div class="cb" style="left:346.9px;top:328.24px"></div>
<div class="sw" style="left:369.9px;top:329.64px;background:linear-gradient(45deg,#7ec8e3 0 31%,#b1deee 31% 39%,#7ec8e3 39% 57%,#b1deee 57% 65%,#7ec8e3 65%)"></div>
<div class="t" style="left:382.40px;top:330px;width:71.32px;font-size:8.5px;color:#43474c;transform:scaleX(0.9300);transform-origin:0 0;">Fire Alarm Devices</div>
<div class="t" style="left:668.75px;top:330px;width:9.45px;font-size:8.5px;color:#33383c;transform:scaleX(0.9550);transform-origin:100% 0;">12</div>
<div class="t" style="left:694.46px;top:330px;width:11.34px;font-size:8.5px;color:#8b9095;transform:scaleX(0.9000);transform-origin:100% 0;">EA</div>
<div class="abs" style="left:341.2px;top:351.00px;width:676.8px;height:215.34px;background:#fff;border:1px solid #e3e5e8;border-radius:3px"></div>
<div class="abs" style="left:342.2px;top:352.00px;width:674.8px;height:23.40px;background:#eff0f2;border-radius:2px 2px 0 0"></div>
<div class="cb" style="left:347.1px;top:358.25px"></div>
<div class="abs" style="left:349.6px;top:363.55px;width:6px;height:1px;background:#e3e5e8"></div>
<svg style="left:0;top:0" width="1" height="1"><path d="M363.2 361.15 H369 L366.1 365.95 Z" fill="none" stroke="#1b1f22" stroke-width="0.95" stroke-linejoin="round"/></svg>
<div class="t" style="left:374.00px;top:359px;width:21.25px;font-size:8.5px;font-weight:bold;color:#15181b;transform:scaleX(0.9250);transform-origin:0 0;">Hotel</div>
<div class="abs" style="left:363.4px;top:375.4px;width:1px;height:190.44px;background:#f4f5f6"></div>
<div class="abs" style="left:609.4px;top:375.4px;width:1px;height:190.44px;background:#f4f5f6"></div>
<div class="abs" style="left:684.3px;top:375.4px;width:1px;height:190.44px;background:#f4f5f6"></div>
<div class="abs" style="left:711.4px;top:375.4px;width:1px;height:190.44px;background:#f4f5f6"></div>
<div class="abs" style="left:786.5px;top:375.4px;width:1px;height:190.44px;background:#f4f5f6"></div>
<div class="abs" style="left:813.5px;top:375.4px;width:1px;height:190.44px;background:#f4f5f6"></div>
<div class="abs" style="left:888px;top:375.4px;width:1px;height:190.44px;background:#f4f5f6"></div>
<div class="abs" style="left:916.2px;top:375.4px;width:1px;height:190.44px;background:#f4f5f6"></div>
<div class="abs" style="left:991.3px;top:375.4px;width:1px;height:190.44px;background:#f4f5f6"></div>
<div class="cb" style="left:346.9px;top:380.48px"></div>
<div class="sw" style="left:369.9px;top:381.88px;background:linear-gradient(45deg,#416fe8 0 31%,#8da8f1 31% 39%,#416fe8 39% 57%,#8da8f1 57% 65%,#416fe8 65%)"></div>
<div class="t" style="left:382.40px;top:382px;width:58.10px;font-size:8.5px;color:#43474c;transform:scaleX(0.9300);transform-origin:0 0;">Unit Entry Door</div>
<div class="t" style="left:668.75px;top:382px;width:9.45px;font-size:8.5px;color:#33383c;transform:scaleX(0.9550);transform-origin:100% 0;">30</div>
<div class="t" style="left:694.46px;top:382px;width:11.34px;font-size:8.5px;color:#8b9095;transform:scaleX(0.9000);transform-origin:100% 0;">EA</div>
<div class="abs" style="left:342.2px;top:396.06px;width:674.8px;height:1px;background:#f0f1f2"></div>
<div class="cb" style="left:346.9px;top:401.64px"></div>
<div class="sw" style="left:369.9px;top:403.04px;background:linear-gradient(45deg,#c043ea 0 31%,#d98ef2 31% 39%,#c043ea 39% 57%,#d98ef2 57% 65%,#c043ea 65%)"></div>
<div class="t" style="left:382.40px;top:403px;width:109.59px;font-size:8.5px;color:#43474c;transform:scaleX(0.9300);transform-origin:0 0;">Framed Glass Shower Doors</div>
<div class="t" style="left:668.75px;top:403px;width:9.45px;font-size:8.5px;color:#33383c;transform:scaleX(0.9550);transform-origin:100% 0;">30</div>
<div class="t" style="left:694.46px;top:403px;width:11.34px;font-size:8.5px;color:#8b9095;transform:scaleX(0.9000);transform-origin:100% 0;">EA</div>
<div class="abs" style="left:342.2px;top:417.22px;width:674.8px;height:1px;background:#f0f1f2"></div>
<div class="cbk" style="left:346.9px;top:422.80px"></div>
<svg style="left:0;top:0" width="1" height="1"><path d="M349.7 428.40 L351.6 429.90 L354.8 426.70" fill="none" stroke="#fff" stroke-width="1.3"/></svg>
<div class="sw" style="left:369.9px;top:424.20px;background:linear-gradient(45deg,#4fa05f 0 31%,#95c69f 31% 39%,#4fa05f 39% 57%,#95c69f 57% 65%,#4fa05f 65%)"></div>
<div class="t" style="left:382.40px;top:424px;width:47.88px;font-size:8.5px;color:#43474c;transform:scaleX(0.9300);transform-origin:0 0;">LVT Flooring</div>
<div class="t" style="left:652.20px;top:424px;width:26.00px;font-size:8.5px;color:#33383c;transform:scaleX(0.9550);transform-origin:100% 0;">15,000</div>
<div class="t" style="left:694.94px;top:424px;width:10.86px;font-size:8.5px;color:#8b9095;transform:scaleX(0.9000);transform-origin:100% 0;">SF</div>
<div class="abs" style="left:342.2px;top:438.38px;width:674.8px;height:1px;background:#f0f1f2"></div>
<div class="cb" style="left:346.9px;top:443.96px"></div>
<div class="sw" style="left:369.9px;top:445.36px;background:linear-gradient(45deg,#7ff0a3 0 31%,#b2f6c7 31% 39%,#7ff0a3 39% 57%,#b2f6c7 57% 65%,#7ff0a3 65%)"></div>
<div class="t" style="left:382.40px;top:445px;width:99.70px;font-size:8.5px;color:#43474c;transform:scaleX(0.9300);transform-origin:0 0;">Signage - Code Compliant</div>
<div class="t" style="left:668.75px;top:445px;width:9.45px;font-size:8.5px;color:#33383c;transform:scaleX(0.9550);transform-origin:100% 0;">15</div>
<div class="t" style="left:694.46px;top:445px;width:11.34px;font-size:8.5px;color:#8b9095;transform:scaleX(0.9000);transform-origin:100% 0;">EA</div>
<div class="abs" style="left:342.2px;top:459.54px;width:674.8px;height:1px;background:#f0f1f2"></div>
<div class="cbk" style="left:346.9px;top:465.12px"></div>
<svg style="left:0;top:0" width="1" height="1"><path d="M349.7 470.72 L351.6 472.22 L354.8 469.02" fill="none" stroke="#fff" stroke-width="1.3"/></svg>
<div class="sw" style="left:369.9px;top:466.52px;background:linear-gradient(45deg,#4fb2f2 0 31%,#95d0f7 31% 39%,#4fb2f2 39% 57%,#95d0f7 57% 65%,#4fb2f2 65%)"></div>
<div class="t" style="left:382.40px;top:467px;width:133.24px;font-size:8.5px;color:#43474c;transform:scaleX(0.9300);transform-origin:0 0;">Balcony Railings - 20 ft per balcony</div>
<div class="t" style="left:664.02px;top:467px;width:14.18px;font-size:8.5px;color:#33383c;transform:scaleX(0.9550);transform-origin:100% 0;">300</div>
<div class="t" style="left:694.46px;top:467px;width:11.34px;font-size:8.5px;color:#8b9095;transform:scaleX(0.9000);transform-origin:100% 0;">EA</div>
<div class="abs" style="left:342.2px;top:480.70px;width:674.8px;height:1px;background:#f0f1f2"></div>
<div class="cb" style="left:346.9px;top:486.28px"></div>
<div class="sw" style="left:369.9px;top:487.68px;background:linear-gradient(45deg,#4f4fe2 0 31%,#9595ed 31% 39%,#4f4fe2 39% 57%,#9595ed 57% 65%,#4f4fe2 65%)"></div>
<div class="t" style="left:382.40px;top:488px;width:88.02px;font-size:8.5px;color:#43474c;transform:scaleX(0.9300);transform-origin:0 0;">HVAC - Packaged RTU</div>
<div class="t" style="left:673.47px;top:488px;width:4.73px;font-size:8.5px;color:#33383c;transform:scaleX(0.9550);transform-origin:100% 0;">4</div>
<div class="t" style="left:694.46px;top:488px;width:11.34px;font-size:8.5px;color:#8b9095;transform:scaleX(0.9000);transform-origin:100% 0;">EA</div>
<div class="abs" style="left:342.2px;top:501.86px;width:674.8px;height:1px;background:#f0f1f2"></div>
<div class="cb" style="left:346.9px;top:507.44px"></div>
<div class="sw" style="left:369.9px;top:508.84px;background:linear-gradient(45deg,#3f9270 0 31%,#8bbda9 31% 39%,#3f9270 39% 57%,#8bbda9 57% 65%,#3f9270 65%)"></div>
<div class="t" style="left:382.40px;top:509px;width:71.32px;font-size:8.5px;color:#43474c;transform:scaleX(0.9300);transform-origin:0 0;">Fire Alarm Devices</div>
<div class="t" style="left:668.75px;top:509px;width:9.45px;font-size:8.5px;color:#33383c;transform:scaleX(0.9550);transform-origin:100% 0;">30</div>
<div class="t" style="left:694.46px;top:509px;width:11.34px;font-size:8.5px;color:#8b9095;transform:scaleX(0.9000);transform-origin:100% 0;">EA</div>
<div class="abs" style="left:342.2px;top:523.02px;width:674.8px;height:1px;background:#f0f1f2"></div>
<div class="cbk" style="left:346.9px;top:528.60px"></div>
<svg style="left:0;top:0" width="1" height="1"><path d="M349.7 534.20 L351.6 535.70 L354.8 532.50" fill="none" stroke="#fff" stroke-width="1.3"/></svg>
<div class="sw" style="left:369.9px;top:530.00px;background:linear-gradient(45deg,#5092f2 0 31%,#96bdf7 31% 39%,#5092f2 39% 57%,#96bdf7 57% 65%,#5092f2 65%)"></div>
<div class="t" style="left:382.40px;top:530px;width:67.08px;font-size:8.5px;color:#43474c;transform:scaleX(0.9300);transform-origin:0 0;">Electrical Devices</div>
<div class="t" style="left:664.02px;top:530px;width:14.18px;font-size:8.5px;color:#33383c;transform:scaleX(0.9550);transform-origin:100% 0;">150</div>
<div class="t" style="left:694.46px;top:530px;width:11.34px;font-size:8.5px;color:#8b9095;transform:scaleX(0.9000);transform-origin:100% 0;">EA</div>
<div class="abs" style="left:342.2px;top:544.18px;width:674.8px;height:1px;background:#f0f1f2"></div>
<div class="cb" style="left:346.9px;top:549.76px"></div>
<div class="sw" style="left:369.9px;top:551.16px;background:linear-gradient(45deg,#c2c23f 0 31%,#dada8b 31% 39%,#c2c23f 39% 57%,#dada8b 57% 65%,#c2c23f 65%)"></div>
<div class="t" style="left:382.40px;top:551px;width:103.46px;font-size:8.5px;color:#43474c;transform:scaleX(0.9300);transform-origin:0 0;">Electrical Fixture Allowance</div>
<div class="t" style="left:668.75px;top:551px;width:9.45px;font-size:8.5px;color:#33383c;transform:scaleX(0.9550);transform-origin:100% 0;">60</div>
<div class="t" style="left:694.46px;top:551px;width:11.34px;font-size:8.5px;color:#8b9095;transform:scaleX(0.9000);transform-origin:100% 0;">EA</div>
<div class="abs" style="left:341.2px;top:572.80px;width:676.8px;height:96.70px;background:#fff;border:1px solid #e3e5e8;border-bottom:none;border-radius:3px 3px 0 0"></div>
<div class="abs" style="left:342.2px;top:573.80px;width:674.8px;height:23.40px;background:#eff0f2;border-radius:2px 2px 0 0"></div>
<div class="cb" style="left:347.1px;top:580.05px"></div>
<div class="abs" style="left:349.6px;top:585.35px;width:6px;height:1px;background:#e3e5e8"></div>
<svg style="left:0;top:0" width="1" height="1"><path d="M363.2 582.95 H369 L366.1 587.75 Z" fill="none" stroke="#1b1f22" stroke-width="0.95" stroke-linejoin="round"/></svg>
<div class="t" style="left:374.00px;top:581px;width:47.25px;font-size:8.5px;font-weight:bold;color:#15181b;transform:scaleX(0.9250);transform-origin:0 0;">Residences</div>
<div class="abs" style="left:363.4px;top:597.1999999999999px;width:1px;height:63.48px;background:#f4f5f6"></div>
<div class="abs" style="left:609.4px;top:597.1999999999999px;width:1px;height:63.48px;background:#f4f5f6"></div>
<div class="abs" style="left:684.3px;top:597.1999999999999px;width:1px;height:63.48px;background:#f4f5f6"></div>
<div class="abs" style="left:711.4px;top:597.1999999999999px;width:1px;height:63.48px;background:#f4f5f6"></div>
<div class="abs" style="left:786.5px;top:597.1999999999999px;width:1px;height:63.48px;background:#f4f5f6"></div>
<div class="abs" style="left:813.5px;top:597.1999999999999px;width:1px;height:63.48px;background:#f4f5f6"></div>
<div class="abs" style="left:888px;top:597.1999999999999px;width:1px;height:63.48px;background:#f4f5f6"></div>
<div class="abs" style="left:916.2px;top:597.1999999999999px;width:1px;height:63.48px;background:#f4f5f6"></div>
<div class="abs" style="left:991.3px;top:597.1999999999999px;width:1px;height:63.48px;background:#f4f5f6"></div>
<div class="cbk" style="left:346.9px;top:602.28px"></div>
<svg style="left:0;top:0" width="1" height="1"><path d="M349.7 607.88 L351.6 609.38 L354.8 606.18" fill="none" stroke="#fff" stroke-width="1.3"/></svg>
<div class="sw" style="left:369.9px;top:603.68px;background:linear-gradient(45deg,#b24fea 0 31%,#d095f2 31% 39%,#b24fea 39% 57%,#d095f2 57% 65%,#b24fea 65%)"></div>
<div class="t" style="left:382.40px;top:604px;width:47.88px;font-size:8.5px;color:#43474c;transform:scaleX(0.9300);transform-origin:0 0;">LVT Flooring</div>
<div class="t" style="left:652.20px;top:604px;width:26.00px;font-size:8.5px;color:#33383c;transform:scaleX(0.9550);transform-origin:100% 0;">25,000</div>
<div class="t" style="left:694.94px;top:604px;width:10.86px;font-size:8.5px;color:#8b9095;transform:scaleX(0.9000);transform-origin:100% 0;">SF</div>
<div class="abs" style="left:342.2px;top:617.86px;width:674.8px;height:1px;background:#f0f1f2"></div>
<div class="cb" style="left:346.9px;top:623.44px"></div>
<div class="sw" style="left:369.9px;top:624.84px;background:linear-gradient(45deg,#3fa04f 0 31%,#8bc695 31% 39%,#3fa04f 39% 57%,#8bc695 57% 65%,#3fa04f 65%)"></div>
<div class="t" style="left:382.40px;top:625px;width:99.70px;font-size:8.5px;color:#43474c;transform:scaleX(0.9300);transform-origin:0 0;">Signage - Code Compliant</div>
<div class="t" style="left:668.75px;top:625px;width:9.45px;font-size:8.5px;color:#33383c;transform:scaleX(0.9550);transform-origin:100% 0;">20</div>
<div class="t" style="left:694.46px;top:625px;width:11.34px;font-size:8.5px;color:#8b9095;transform:scaleX(0.9000);transform-origin:100% 0;">EA</div>
<div class="abs" style="left:342.2px;top:639.02px;width:674.8px;height:1px;background:#f0f1f2"></div>
<div class="cbk" style="left:346.9px;top:644.60px"></div>
<svg style="left:0;top:0" width="1" height="1"><path d="M349.7 650.20 L351.6 651.70 L354.8 648.50" fill="none" stroke="#fff" stroke-width="1.3"/></svg>
<div class="sw" style="left:369.9px;top:646.00px;background:linear-gradient(45deg,#b2d38f 0 31%,#d0e4bb 31% 39%,#b2d38f 39% 57%,#d0e4bb 57% 65%,#b2d38f 65%)"></div>
<div class="t" style="left:382.40px;top:646px;width:133.24px;font-size:8.5px;color:#43474c;transform:scaleX(0.9300);transform-origin:0 0;">Balcony Railings - 20 ft per balcony</div>
<div class="t" style="left:668.75px;top:646px;width:9.45px;font-size:8.5px;color:#33383c;transform:scaleX(0.9550);transform-origin:100% 0;">40</div>
<div class="t" style="left:694.46px;top:646px;width:11.34px;font-size:8.5px;color:#8b9095;transform:scaleX(0.9000);transform-origin:100% 0;">EA</div>
<div class="abs" style="left:328px;top:661.5px;width:704px;height:9px;background:#f8f8f9"></div>
</body></html>
